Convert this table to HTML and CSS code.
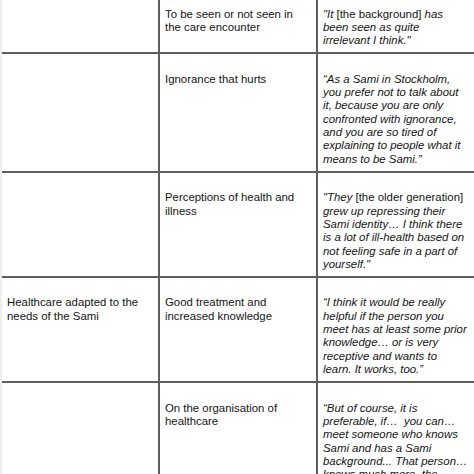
FILE: index.html
```html
<!DOCTYPE html>
<html lang="en">
<head>
<meta charset="utf-8">
<title>Themes table</title>
<link rel="stylesheet" href="styles.css">
</head>
<body>
<div class="page">
<table class="themes">
  <colgroup>
    <col class="c-cat">
    <col class="c-sub">
    <col class="c-quote">
  </colgroup>
  <tbody>
    <tr>
      <td></td>
      <td>To be seen or not seen in the care encounter</td>
      <td class="quote"><em>"It</em> [the background] <em>has been seen as quite irrelevant I think."</em></td>
    </tr>
    <tr>
      <td></td>
      <td>Ignorance that hurts</td>
      <td class="quote"><em>“As a Sami in Stockholm, you prefer not to talk about it, because you are only confronted with ignorance, and you are so tired of explaining to people what it means to be Sami.”</em></td>
    </tr>
    <tr>
      <td></td>
      <td>Perceptions of health and illness</td>
      <td class="quote"><em>"They</em> [the older generation] <em>grew up repressing their Sami identity… I think there is a lot of ill-health based on not feeling safe in a part of yourself."</em></td>
    </tr>
    <tr>
      <td>Healthcare adapted to the needs of the Sami</td>
      <td>Good treatment and increased knowledge</td>
      <td class="quote"><em>“I think it would be really helpful if the person you meet has at least some prior knowledge… or is very receptive and wants to learn. It works, too.”</em></td>
    </tr>
    <tr>
      <td></td>
      <td>On the organisation of healthcare</td>
      <td class="quote"><em>“But of course, it is preferable, if…&nbsp; you can… meet someone who knows Sami and has a Sami background... That person… knows much more, the culture and the language…”</em></td>
    </tr>
  </tbody>
</table>
</div>
</body>
</html>
```

FILE: styles.css
```css
html, body {
  margin: 0;
  padding: 0;
  background: #ffffff;
}

body {
  width: 474px;
  height: 474px;
  overflow: hidden;
  border-left: 2px solid #ededed;
  box-sizing: border-box;
}

.page {
  margin-left: -2px;
  margin-top: -11px;
}

.themes {
  border-collapse: collapse;
  table-layout: fixed;
  width: 500px;
  font-family: "Liberation Sans", Arial, sans-serif;
  font-size: 11.4px;
  line-height: 13.33px;
  color: #141414;
}

.c-cat { width: 159px; }
.c-sub { width: 158px; }
.c-quote { width: 183px; }

.themes td {
  vertical-align: top;
  border: 2px solid #5e5e5e;
  padding: 18.6px 8px 4.6px 5px;
}

.themes td:first-child {
  border-left: none;
  padding-left: 7px;
}

.themes tr:first-child td {
  border-top: none;
}

.themes td.quote {
  padding-right: 31px;
}

.themes em {
  font-style: italic;
}
```
